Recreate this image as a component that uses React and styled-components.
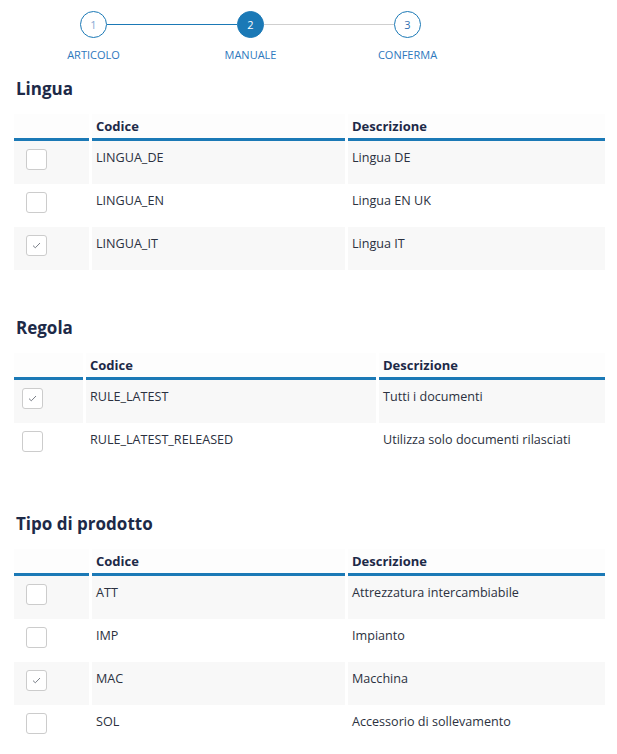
import React from 'react';
import styled, { createGlobalStyle } from 'styled-components';

const GlobalStyle = createGlobalStyle`
    body {
        margin: 0;
        background: #fff;
        font-family: "Open Sans", "Liberation Sans", sans-serif;
        color: #2b3140;
    }
`;

const BLUE = '#1b79b6';

const Page = styled.div`
    width: 617px;
    padding: 0 12px 0 14px;
    box-sizing: border-box;
`;

const Stepper = styled.div`
    display: grid;
    grid-template-columns: repeat(3, 157px);
    margin-left: 1px;
    padding-top: 11px;
    margin-bottom: 17px;
`;

const Step = styled.div`
    display: flex;
    flex-direction: column;
    align-items: center;
`;

const Track = styled.div`
    display: flex;
    align-items: center;
    width: 100%;
    height: 27px;
`;

const Line = styled.div`
    flex: 1;
    height: 1.5px;
    background: ${p => p.$color || 'transparent'};
`;

const Circle = styled.div`
    width: 27px;
    height: 27px;
    box-sizing: border-box;
    border-radius: 50%;
    border: 1.5px solid ${BLUE};
    background: ${p => (p.$active ? BLUE : '#fff')};
    color: ${p => (p.$active ? '#fff' : p.$muted ? '#86a9d3' : '#2f6fb0')};
    font-size: 11px;
    display: flex;
    align-items: center;
    justify-content: center;
    line-height: 1;
`;

const StepLabel = styled.div`
    margin-top: 9px;
    font-size: 11px;
    line-height: 15px;
    color: #2e78bd;
    text-transform: uppercase;
`;

const Section = styled.section`
    margin-bottom: 48px;

    &:last-child {
        margin-bottom: 0;
    }
`;

const Title = styled.h2`
    margin: 0 0 15px 2px;
    font-size: 17px;
    line-height: 20px;
    font-weight: 700;
    color: #1d2a48;
`;

const Grid = styled.div`
    display: grid;
    grid-template-columns: ${p => p.$cols};
    column-gap: 3px;
`;

const HeadCell = styled.div`
    height: 27px;
    box-sizing: border-box;
    padding: 3px 4px 3px;
    font-size: 13px;
    line-height: 18px;
    font-weight: 700;
    color: #1d2a48;
    background: #fdfdfd;
    border-bottom: 3px solid ${BLUE};
`;

const Cell = styled.div`
    height: 43px;
    box-sizing: border-box;
    padding: 8px 4px 0;
    font-size: 12.6px;
    line-height: 18px;
    color: #2b3140;
    background: ${p => (p.$odd ? '#f8f8f8' : '#fff')};
`;

const BoxCell = styled(Cell)`
    padding: 8px 0 0 ${p => p.$inset}px;
`;

const Box = styled.div`
    width: 21px;
    height: 21px;
    box-sizing: border-box;
    border: 1px solid #cccccc;
    border-radius: 3px;
    background: #fff;
    display: flex;
    align-items: center;
    justify-content: center;
`;

const Check = () => (
    <svg width="9" height="7" viewBox="0 0 9 7">
        <path d="M1 3.6 L3.3 5.8 L8 1" fill="none" stroke="#7a7f88" strokeWidth="1" />
    </svg>
);

const tables = [
    {
        title: 'Lingua',
        cols: '75px 253px 257px',
        inset: 12,
        rows: [
            ['LINGUA_DE', 'Lingua DE', false],
            ['LINGUA_EN', 'Lingua EN UK', false],
            ['LINGUA_IT', 'Lingua IT', true],
        ],
    },
    {
        title: 'Regola',
        cols: '69px 290px 226px',
        inset: 8,
        rows: [
            ['RULE_LATEST', 'Tutti i documenti', true],
            ['RULE_LATEST_RELEASED', 'Utilizza solo documenti rilasciati', false],
        ],
    },
    {
        title: 'Tipo di prodotto',
        cols: '75px 253px 257px',
        inset: 12,
        rows: [
            ['ATT', 'Attrezzatura intercambiabile', false],
            ['IMP', 'Impianto', false],
            ['MAC', 'Macchina', true],
            ['SOL', 'Accessorio di sollevamento', false],
        ],
    },
];

const steps = [
    { n: 1, label: 'Articolo', left: null, right: BLUE, muted: true },
    { n: 2, label: 'Manuale', left: BLUE, right: '#cfcfcf', active: true },
    { n: 3, label: 'Conferma', left: '#cfcfcf', right: null },
];

const App = () => {
    return (
        <Page>
            <GlobalStyle />
            <Stepper>
                {steps.map(s => (
                    <Step key={s.n}>
                        <Track>
                            <Line $color={s.left} />
                            <Circle $active={s.active} $muted={s.muted}>{s.n}</Circle>
                            <Line $color={s.right} />
                        </Track>
                        <StepLabel>{s.label}</StepLabel>
                    </Step>
                ))}
            </Stepper>

            {tables.map(t => (
                <Section key={t.title}>
                    <Title>{t.title}</Title>
                    <Grid $cols={t.cols}>
                        <HeadCell />
                        <HeadCell>Codice</HeadCell>
                        <HeadCell>Descrizione</HeadCell>
                        {t.rows.map(([code, desc, checked], i) => (
                            <React.Fragment key={code}>
                                <BoxCell $odd={i % 2 === 0} $inset={t.inset}>
                                    <Box>{checked && <Check />}</Box>
                                </BoxCell>
                                <Cell $odd={i % 2 === 0}>{code}</Cell>
                                <Cell $odd={i % 2 === 0}>{desc}</Cell>
                            </React.Fragment>
                        ))}
                    </Grid>
                </Section>
            ))}
        </Page>
    );
};

export default App;
